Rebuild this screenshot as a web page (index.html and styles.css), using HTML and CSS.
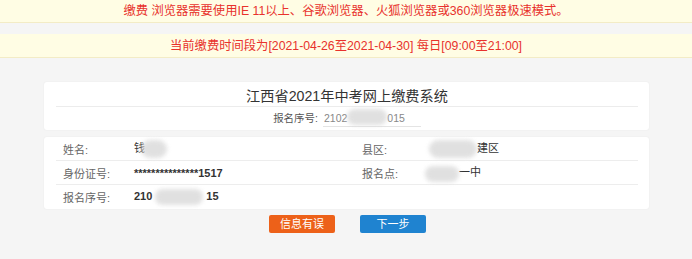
FILE: index.html
```html
<!DOCTYPE html>
<html lang="zh-CN">
<head>
<meta charset="utf-8">
<title>江西省2021年中考网上缴费系统</title>
<link rel="stylesheet" href="styles.css">
</head>
<body>
<div class="notice notice-first">缴费 浏览器需要使用IE 11以上、谷歌浏览器、火狐浏览器或360浏览器极速模式。</div>
<div class="notice notice-second">当前缴费时间段为[2021-04-26至2021-04-30] 每日[09:00至21:00]</div>

<main class="wrap">
  <section class="card head-card">
    <h1 class="title">江西省2021年中考网上缴费系统</h1>
    <div class="sub">
      <span class="sub-label">报名序号:</span>
      <span class="sub-value">2102<span class="blob blob-sub"></span>015</span>
    </div>
  </section>

  <section class="card info-card">
    <div class="col col-left">
      <div class="row"><span class="label">姓名:</span><span class="value">钱<span class="blob blob-name"></span></span></div>
      <div class="row"><span class="label">身份证号:</span><span class="value strong">***************1517</span></div>
      <div class="row last"><span class="label">报名序号:</span><span class="value strong">210<span class="blob blob-num"></span>15</span></div>
    </div>
    <div class="col col-right">
      <div class="row"><span class="label">县区:</span><span class="value"><span class="blob blob-county"></span>建区</span></div>
      <div class="row"><span class="label">报名点:</span><span class="value"><span class="blob blob-site"></span>一中</span></div>
    </div>
  </section>

  <div class="actions">
    <button class="btn btn-warn" type="button">信息有误</button>
    <button class="btn btn-next" type="button">下一步</button>
  </div>
</main>
</body>
</html>
```

FILE: styles.css
```css
html, body {
  margin: 0;
  padding: 0;
}
body {
  background: #f5f5f5;
  font-family: "Liberation Sans", "Noto Sans CJK SC", sans-serif;
  color: #333;
  width: 692px;
  height: 259px;
  overflow: hidden;
}
.notice {
  background: #fffde4;
  border-bottom: 1px solid #f3ecc6;
  color: #e8322c;
  text-align: center;
  font-size: 12.3px;
  height: 22px;
  line-height: 23px;
}
.notice-second {
  margin-top: 11px;
  height: 23px;
  line-height: 24px;
}
.wrap {
  padding: 24px 43px 0 44px;
}
.card {
  background: #fff;
  border-radius: 3px;
  box-shadow: 0 0 2px rgba(0, 0, 0, 0.06);
}
.head-card {
  height: 48px;
  padding: 0 11px 0 12px;
  box-sizing: border-box;
  text-align: center;
  overflow: hidden;
}
.title {
  margin: 0;
  font-weight: normal;
  font-size: 14.2px;
  color: #333;
  height: 24px;
  line-height: 29px;
  border-bottom: 1px solid #ececec;
}
.sub {
  font-size: 10.5px;
  line-height: 22px;
  color: #555;
}
.sub-label {
  margin-right: 2px;
}
.sub-value {
  display: inline-block;
  color: #888;
  border-bottom: 1px solid #e4e4e4;
  line-height: 15px;
  padding: 0 16px 0 1px;
}
.blob {
  display: inline-block;
  vertical-align: middle;
  background: #d9d9d9;
  border-radius: 12px;
  filter: blur(2px);
  opacity: 0.8;
}
.blob-sub { width: 40px; height: 16px; margin: -4px 0 0 0; }
.blob-name { width: 26px; height: 18px; margin-left: -4px; }
.blob-num { width: 48px; height: 16px; margin: 0 3px; }
.blob-county { width: 48px; height: 18px; margin-right: 0; }
.blob-site { width: 34px; height: 16px; margin-left: -4px; }

.info-card {
  margin-top: 7px;
  height: 72px;
  padding: 0 11px 0 12px;
  box-sizing: border-box;
  display: grid;
  grid-template-columns: 294px 1fr;
}
.row {
  height: 24px;
  box-sizing: border-box;
  border-bottom: 1px solid #ededed;
  display: flex;
  align-items: center;
  font-size: 11px;
}
.row.last {
  border-bottom: none;
}
.col-left .row { padding-left: 7px; }
.col-right .row { padding-left: 12px; }
.label {
  color: #666;
  flex: 0 0 71px;
}
.col-right .label {
  flex-basis: 67px;
}
.value {
  color: #333;
  white-space: nowrap;
}
.strong {
  font-weight: bold;
}
.actions {
  display: flex;
  justify-content: center;
  gap: 25px;
  margin-top: 6px;
  padding-left: 2px;
}
.btn {
  width: 66px;
  height: 18px;
  border: none;
  border-radius: 2px;
  color: #fff;
  font-family: "Liberation Sans", "Noto Sans CJK SC", sans-serif;
  font-size: 11px;
  line-height: 18px;
  padding: 0;
}
.btn-warn { background: #ed6119; }
.btn-next { background: #1f83d0; }
```
